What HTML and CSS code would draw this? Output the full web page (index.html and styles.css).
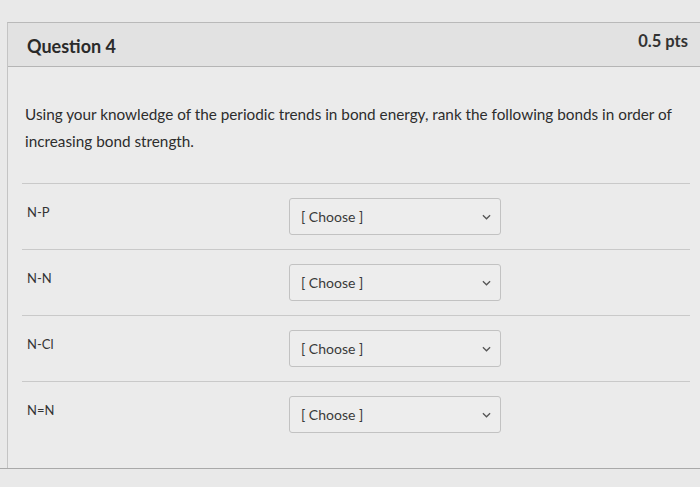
FILE: index.html
```html
<!DOCTYPE html>
<html lang="en">
<head>
    <meta charset="UTF-8">
    <meta name="viewport" content="width=device-width, initial-scale=1.0">
    <title>Quiz - Question 4</title>
    <link rel="stylesheet" href="styles.css">
</head>
<body>
    <div class="question">
        <div class="question-header">
            <h2>Question 4</h2>
            <span class="points">0.5 pts</span>
        </div>

        <p class="question-text">Using your knowledge of the periodic trends in bond energy, rank the following bonds in order of increasing bond strength.</p>

        <div class="answers">
            <div class="answer">
                <span class="answer-label">N-P</span>
                <div class="select">
                    <span>[ Choose ]</span>
                    <svg class="chevron" viewBox="0 0 10 6" width="9" height="6"><path d="M1 1l4 4 4-4" fill="none" stroke="#555" stroke-width="1.4"/></svg>
                </div>
            </div>
            <div class="answer">
                <span class="answer-label">N-N</span>
                <div class="select">
                    <span>[ Choose ]</span>
                    <svg class="chevron" viewBox="0 0 10 6" width="9" height="6"><path d="M1 1l4 4 4-4" fill="none" stroke="#555" stroke-width="1.4"/></svg>
                </div>
            </div>
            <div class="answer">
                <span class="answer-label">N-Cl</span>
                <div class="select">
                    <span>[ Choose ]</span>
                    <svg class="chevron" viewBox="0 0 10 6" width="9" height="6"><path d="M1 1l4 4 4-4" fill="none" stroke="#555" stroke-width="1.4"/></svg>
                </div>
            </div>
            <div class="answer">
                <span class="answer-label">N=N</span>
                <div class="select">
                    <span>[ Choose ]</span>
                    <svg class="chevron" viewBox="0 0 10 6" width="9" height="6"><path d="M1 1l4 4 4-4" fill="none" stroke="#555" stroke-width="1.4"/></svg>
                </div>
            </div>
        </div>
    </div>
    <div class="bottom-rule"></div>
</body>
</html>
```

FILE: styles.css
```css
body {
    margin: 0;
    padding-top: 22px;
    background-color: #e9e9e9;
    font-family: Lato, "Liberation Sans", sans-serif;
    color: #2d2d2d;
}
.question {
    margin-left: 7px;
    border-left: 1px solid #c4c4c4;
    border-top: 1px solid #b9b9b9;
    background-color: #ebebeb;
    padding-bottom: 21px;
}
.question-header {
    display: flex;
    justify-content: space-between;
    align-items: flex-start;
    height: 43px;
    padding: 0 12px 0 19px;
    background-color: #e2e2e2;
    border-bottom: 1px solid #b5b5b5;
}
.question-header h2 {
    margin: 12px 0 0;
    font-size: 18px;
    font-weight: 700;
    color: #2a2a2a;
}
.points {
    margin-top: 8px;
    font-size: 16.5px;
    font-weight: 700;
    color: #333;
}
.question-text {
    margin: 34px 14px 28px 17px;
    font-size: 15.3px;
    line-height: 27px;
    color: #2d2d2d;
}
.answers {
    margin: 0 10px 0 14px;
}
.answer {
    display: flex;
    height: 65px;
    border-top: 1px solid #c9c9c9;
}
.answer-label {
    width: 262px;
    padding: 20px 0 0 5px;
    font-size: 13px;
    color: #333;
}
.select {
    display: flex;
    align-items: center;
    justify-content: space-between;
    box-sizing: border-box;
    width: 212px;
    height: 37px;
    margin-top: 14px;
    padding: 0 9px 0 11px;
    border: 1px solid #c2c2c2;
    border-radius: 3px;
    background-color: #ededed;
    font-size: 14px;
    color: #3a3a3a;
}
.bottom-rule {
    border-top: 1px solid #a9a9a9;
}
```
